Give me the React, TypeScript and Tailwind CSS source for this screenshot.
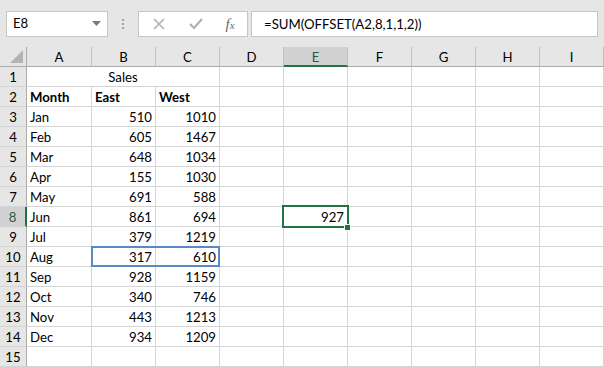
import React from "react";

const cols = ["A", "B", "C", "D", "E", "F", "G", "H", "I"];

type Cell = { t: string; align?: "l" | "r"; bold?: boolean };

const data: Record<number, Record<string, Cell>> = {
  2: { A: { t: "Month", bold: true }, B: { t: "East", bold: true }, C: { t: "West", bold: true } },
};
const rows: [string, number, number][] = [
  ["Jan", 510, 1010],
  ["Feb", 605, 1467],
  ["Mar", 648, 1034],
  ["Apr", 155, 1030],
  ["May", 691, 588],
  ["Jun", 861, 694],
  ["Jul", 379, 1219],
  ["Aug", 317, 610],
  ["Sep", 928, 1159],
  ["Oct", 340, 746],
  ["Nov", 443, 1213],
  ["Dec", 934, 1209],
];
rows.forEach((r, i) => {
  data[i + 3] = {
    A: { t: r[0] },
    B: { t: String(r[1]), align: "r" },
    C: { t: String(r[2]), align: "r" },
  };
});
data[8].E = { t: "927", align: "r" };

const font = { fontFamily: 'Lato, "Liberation Sans", Arial, sans-serif' };

export default function App() {
  return (
    <div
      className="relative w-[604px] h-[367px] overflow-hidden bg-[#e6e6e6] text-[13.2px] text-black"
      style={font}
    >
      {/* toolbar */}
      <div className="h-[47px] flex items-start pt-[11px] pl-[6px]">
        <div className="w-[102px] h-[26px] bg-white border border-[#c6c6c6] flex items-center pl-[6px] pr-[6px] justify-between">
          <span>E8</span>
          <svg width="9" height="6" viewBox="0 0 9 6">
            <path d="M0 0 L9 0 L4.5 5 Z" fill="#7a7a7a" />
          </svg>
        </div>
        <div className="w-[30px] h-[26px] flex flex-col items-center justify-center gap-[2px]">
          <div className="w-[2px] h-[2px] bg-[#a0a0a0]" />
          <div className="w-[2px] h-[2px] bg-[#a0a0a0]" />
          <div className="w-[2px] h-[2px] bg-[#a0a0a0]" />
        </div>
        <div className="w-[110px] h-[26px] bg-white border border-[#c6c6c6] flex items-center">
          <div className="w-[38px] flex justify-center pl-[2px]">
            <svg width="12" height="12" viewBox="0 0 12 12">
              <path d="M1 1 L11 11 M11 1 L1 11" stroke="#b0b0b0" strokeWidth="1.6" />
            </svg>
          </div>
          <div className="w-[38px] flex justify-center">
            <svg width="14" height="12" viewBox="0 0 14 12">
              <path d="M1 6 L5 10 L13 1" stroke="#b0b0b0" strokeWidth="2.2" fill="none" />
            </svg>
          </div>
          <div className="flex-1 flex justify-center pr-[2px]">
            <span
              className="italic text-[15px] text-[#6a6a6a]"
              style={{ fontFamily: '"Liberation Serif", "Times New Roman", serif' }}
            >
              f<span className="text-[11px]">x</span>
            </span>
          </div>
        </div>
        <div className="ml-[3px] w-[347px] h-[26px] bg-white border border-[#c6c6c6] flex items-center pl-[12px] pt-[1px]">
          =SUM(OFFSET(A2,8,1,1,2))
        </div>
      </div>

      {/* header row */}
      <div className="flex h-[20px]">
        <div className="w-[27px] h-[20px] border-r border-b border-[#ababab] relative">
          <svg className="absolute right-[3px] bottom-[3px]" width="13" height="13" viewBox="0 0 13 13">
            <path d="M13 0 L13 13 L0 13 Z" fill="#b4b4b4" />
          </svg>
        </div>
        {cols.map((c, i) => (
          <div
            key={c}
            className={
              (i === 0 ? "w-[65px] " : "w-[64px] ") +
              (c === "E"
                ? "bg-[#d2d2d2] border-b-2 border-b-[#217346] text-[#2a5a3e] pt-[3px] "
                : "border-b border-b-[#ababab] pt-[2px] ") +
              "h-[20px] border-r border-r-[#c0c0c0] flex items-center justify-center leading-none"
            }
          >
            {c}
          </div>
        ))}
      </div>

      {/* grid rows */}
      {Array.from({ length: 15 }, (_, ri) => {
        const r = ri + 1;
        const sel = r === 8;
        return (
          <div key={r} className="flex h-[20px]">
            <div
              className={
                "w-[27px] h-[20px] border-b border-b-[#d4d4d4] flex items-center justify-center leading-none pt-[2px] " +
                (sel
                  ? "bg-[#d2d2d2] border-r-2 border-r-[#217346] text-[#2a5a3e]"
                  : "border-r border-r-[#ababab]")
              }
            >
              {r}
            </div>
            {r === 1 ? (
              <>
                <div className="w-[193px] h-[20px] bg-white border-r border-b border-[#d4d4d4] flex items-center justify-center leading-none pt-[2px]">
                  Sales
                </div>
                {cols.slice(3).map((c) => (
                  <div key={c} className="w-[64px] h-[20px] bg-white border-r border-b border-[#d4d4d4]" />
                ))}
              </>
            ) : (
              cols.map((c, i) => {
                const cell = data[r]?.[c];
                return (
                  <div
                    key={c}
                    className={
                      (i === 0 ? "w-[65px] " : "w-[64px] ") +
                      "h-[20px] bg-white border-r border-b border-[#d4d4d4] flex items-center px-[3px] pt-[2px] leading-none whitespace-nowrap " +
                      (cell?.align === "r" ? "justify-end " : "justify-start ") +
                      (cell?.bold ? "font-bold" : "")
                    }
                  >
                    {cell?.t}
                  </div>
                );
              })
            )}
          </div>
        );
      })}

      {/* blue range B10:C10 */}
      <div className="absolute left-[91px] top-[246px] w-[129px] h-[21px] border-2 border-[#5a8ac6] pointer-events-none" />

      {/* green active cell E8 */}
      <div className="absolute left-[282px] top-[205px] w-[67px] h-[23px] border-2 border-[#217346] pointer-events-none" />
      <div className="absolute left-[344px] top-[224px] w-[7px] h-[7px] bg-white" />
      <div className="absolute left-[345px] top-[225px] w-[5px] h-[5px] bg-[#217346]" />
    </div>
  );
}
